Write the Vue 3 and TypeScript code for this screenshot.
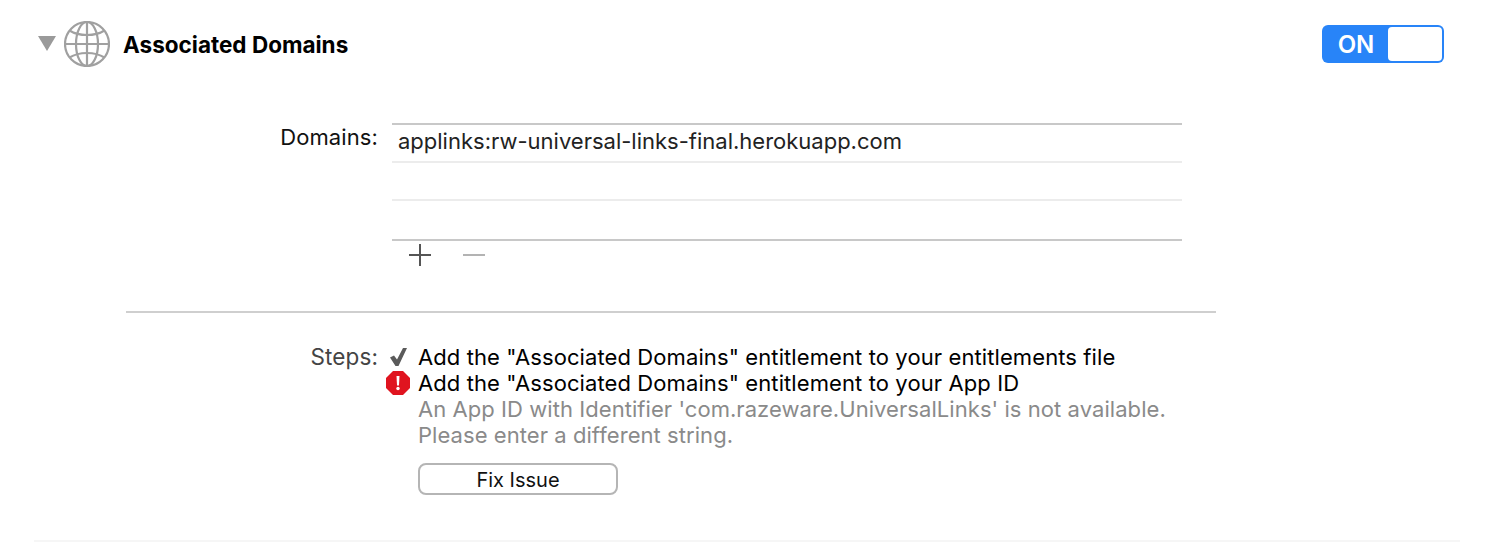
<script setup lang="ts">
const steps = [
  { text: 'Add the "Associated Domains" entitlement to your entitlements file', ok: true },
  { text: 'Add the "Associated Domains" entitlement to your App ID', ok: false },
]
</script>

<template>
  <div class="page">
    <header class="head">
      <svg class="tri" width="18" height="15" viewBox="0 0 18 15"><path d="M0 0H18L9 15Z" fill="#9a9a9a" /></svg>
      <svg class="globe" width="46" height="46" viewBox="0 0 46 46" fill="none" stroke="#a0a0a0" stroke-width="2.200">
        <circle cx="23" cy="23" r="22" />
        <path d="M23 1V45M1 23H45" />
        <ellipse cx="23" cy="23" rx="11" ry="22" />
        <path d="M5.500 9.500C15 15.500 31 15.500 40.500 9.500M5.500 36.500C15 30.500 31 30.500 40.500 36.500" />
      </svg>
      <h1 class="title">Associated Domains</h1>
      <div class="toggle">
        <span class="on">ON</span>
        <span class="knob"></span>
      </div>
    </header>

    <section class="domains">
      <div class="label dark">Domains:</div>
      <div class="table">
        <div class="row first">applinks:rw-universal-links-final.herokuapp.com</div>
        <div class="row"></div>
        <div class="row last"></div>
        <div class="tools">
          <svg width="22" height="22" viewBox="0 0 22 22"><path d="M11 0V22M0 11H22" stroke="#555" stroke-width="2" /></svg>
          <svg width="22" height="22" viewBox="0 0 22 22"><path d="M0 11H22" stroke="#b3b3b3" stroke-width="2" /></svg>
        </div>
      </div>
    </section>

    <hr class="sep" />

    <section class="stepsec">
      <div class="label grey">Steps:</div>
      <div class="steps">
        <div v-for="s in steps" :key="s.text" class="step">
          <span class="ico">
            <svg v-if="s.ok" width="17" height="18" viewBox="0 0 17 18"><path d="M0 9.500L4 7.500L7 11.500L13 0H17L8.500 18H5.500Z" fill="#5a5a5a" /></svg>
            <svg v-else width="24" height="24" viewBox="0 0 24 24">
              <path d="M7 0H17L24 7V17L17 24H7L0 17V7Z" fill="#e0141f" />
              <path d="M10.500 5H13.500L13 14.500H11Z" fill="#fff" />
              <circle cx="12" cy="17.500" r="1.700" fill="#fff" />
            </svg>
          </span>
          <span>{{ s.text }}</span>
        </div>
        <p class="msg">An App ID with Identifier 'com.razeware.UniversalLinks' is not available.<br />Please enter a different string.</p>
        <button class="fix" type="button">Fix Issue</button>
      </div>
    </section>

    <div class="bottom"></div>
  </div>
</template>

<style scoped>
.page {
  position: relative;
  width: 1495px;
  height: 543px;
  background: #fff;
  overflow: hidden;
  font-family: Inter, "Liberation Sans", sans-serif;
  font-size: 22px;
  color: #000;
  display: flex;
  flex-direction: column;
}
.head {
  display: flex;
  align-items: center;
  height: 46px;
  margin-top: 21px;
  padding-left: 38px;
  width: 1406px;
}
.tri { margin-right: 8px; margin-top: -1px; }
.globe { margin-right: 13px; }
.title {
  margin: 0;
  font-size: 22.500px;
  font-weight: 700;
  flex: 1;
  margin-top: 1px;
}
.toggle {
  width: 122px;
  height: 38px;
  box-sizing: border-box;
  background: #2884f8;
  border-radius: 6px;
  display: flex;
  align-items: stretch;
  padding: 2px;
  margin-top: -1px;
}
.on {
  width: 64px;
  color: #fff;
  font-weight: 600;
  font-size: 24px;
  padding-top: 2px;
  display: flex;
  align-items: center;
  justify-content: center;
}
.knob {
  flex: 1;
  background: #fff;
  border-radius: 4px;
}
.domains, .stepsec {
  display: grid;
  grid-template-columns: 378px 790px;
  column-gap: 14px;
}
.domains { margin-top: 56px; }
.label { text-align: right; line-height: 26px; letter-spacing: 0.100px; }
.dark { color: #111; margin-top: 1px; }
.grey { color: #444; font-size: 22.500px; }
.row {
  height: 38px;
  box-sizing: border-box;
  border-top: 2px solid #ececec;
  padding-left: 6px;
  line-height: 33px;
  color: #222;
}
.row.first { border-top-color: #c8c8c8; }
.last { height: 40px; }
.tools {
  border-top: 2px solid #c8c8c8;
  display: flex;
  gap: 32px;
  padding: 3px 0 0 17px;
}
.tools svg { display: block; }
.sep {
  margin: 45px 0 0 126px;
  width: 1090px;
  height: 2px;
  border: 0;
  background: #cfcfcf;
}
.stepsec { margin-top: 31px; }
.step {
  position: relative;
  padding-left: 26px;
  line-height: 26px;
  letter-spacing: 0.100px;
  white-space: nowrap;
}
.ico {
  position: absolute;
  left: -6px;
  top: 1px;
  width: 24px;
  height: 24px;
  display: flex;
  align-items: center;
  justify-content: center;
}
.msg {
  margin: 0;
  padding-left: 26px;
  line-height: 26px;
  letter-spacing: 0.060px;
  color: #8a8a8a;
}
.fix {
  display: block;
  margin: 15px 0 0 26px;
  width: 200px;
  height: 32px;
  box-sizing: border-box;
  background: #fff;
  border: 2px solid #b5b5b5;
  border-radius: 8px;
  font-family: inherit;
  font-size: 20px;
  color: #111;
  padding: 2px 0 0;
}
.bottom {
  position: absolute;
  left: 34px;
  width: 1426px;
  bottom: 1px;
  height: 2px;
  background: #f6f6f6;
}
</style>
